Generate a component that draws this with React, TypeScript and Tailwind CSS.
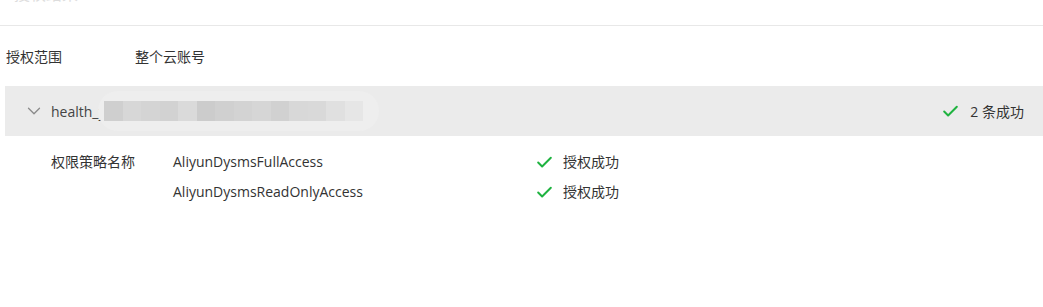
import { Check, ChevronDown } from "lucide-react";

const policies = ["AliyunDysmsFullAccess", "AliyunDysmsReadOnlyAccess"];

// 打码色块
const mosaic = [
  "#cfcfcf", "#d7d7d7", "#d4d4d4", "#d2d2d2", "#dadada", "#cccccc", "#d0d0d0",
  "#d3d3d3", "#d6d6d6", "#d1d1d1", "#d8d8d8", "#d9d9d9", "#e0e0e0", "#e6e6e6",
];

export default function App() {
  return (
    <div
      className="w-[1043px] h-[307px] bg-white overflow-hidden text-[14px] text-[#333]"
      style={{ fontFamily: '"Open Sans", "Noto Sans CJK SC", sans-serif' }}
    >
      {/* 标题 (被裁掉) */}
      <div className="h-[26px] border-b border-[#e8e8e8] overflow-hidden">
        <div className="-mt-[18px] pl-[14px] text-[16px] text-[#ddd]">授权结果</div>
      </div>

      {/* 授权范围 */}
      <div className="flex items-center h-[60px] pl-[6px]">
        <span className="w-[129px]">授权范围</span>
        <span>整个云账号</span>
      </div>

      {/* 账号行 */}
      <div className="ml-[5px] h-[50px] bg-[#ebebeb] flex items-center pl-[18px] pr-[19px]">
        <ChevronDown size={22} strokeWidth={1.4} className="text-[#8a8a8a]" />
        <span className="ml-[6px] text-[#444]">health_y</span>
        <div className="relative flex h-[20px] -ml-[1px]">
          <div className="absolute -left-[6px] -right-[16px] -top-[10px] -bottom-[10px] rounded-full bg-[#eeeeee]" />
          {mosaic.map((c, i) => (
            <div key={i} className="relative w-[18.5px] h-[20px]" style={{ backgroundColor: c }} />
          ))}
        </div>
        <div className="ml-auto flex items-center gap-[10px]">
          <Check size={19} strokeWidth={2.5} className="text-[#1fb340]" />
          <span>2 条成功</span>
        </div>
      </div>

      {/* 权限策略 */}
      <div className="flex pl-[51px] pt-[14px]">
        <span className="w-[122px] leading-[24px]">权限策略名称</span>
        <div className="flex flex-col gap-[6px]">
          {policies.map((p) => (
            <div key={p} className="flex items-center leading-[24px]">
              <span className="w-[362px]">{p}</span>
              <Check size={19} strokeWidth={2.5} className="text-[#1fb340]" />
              <span className="ml-[9px]">授权成功</span>
            </div>
          ))}
        </div>
      </div>
    </div>
  );
}
